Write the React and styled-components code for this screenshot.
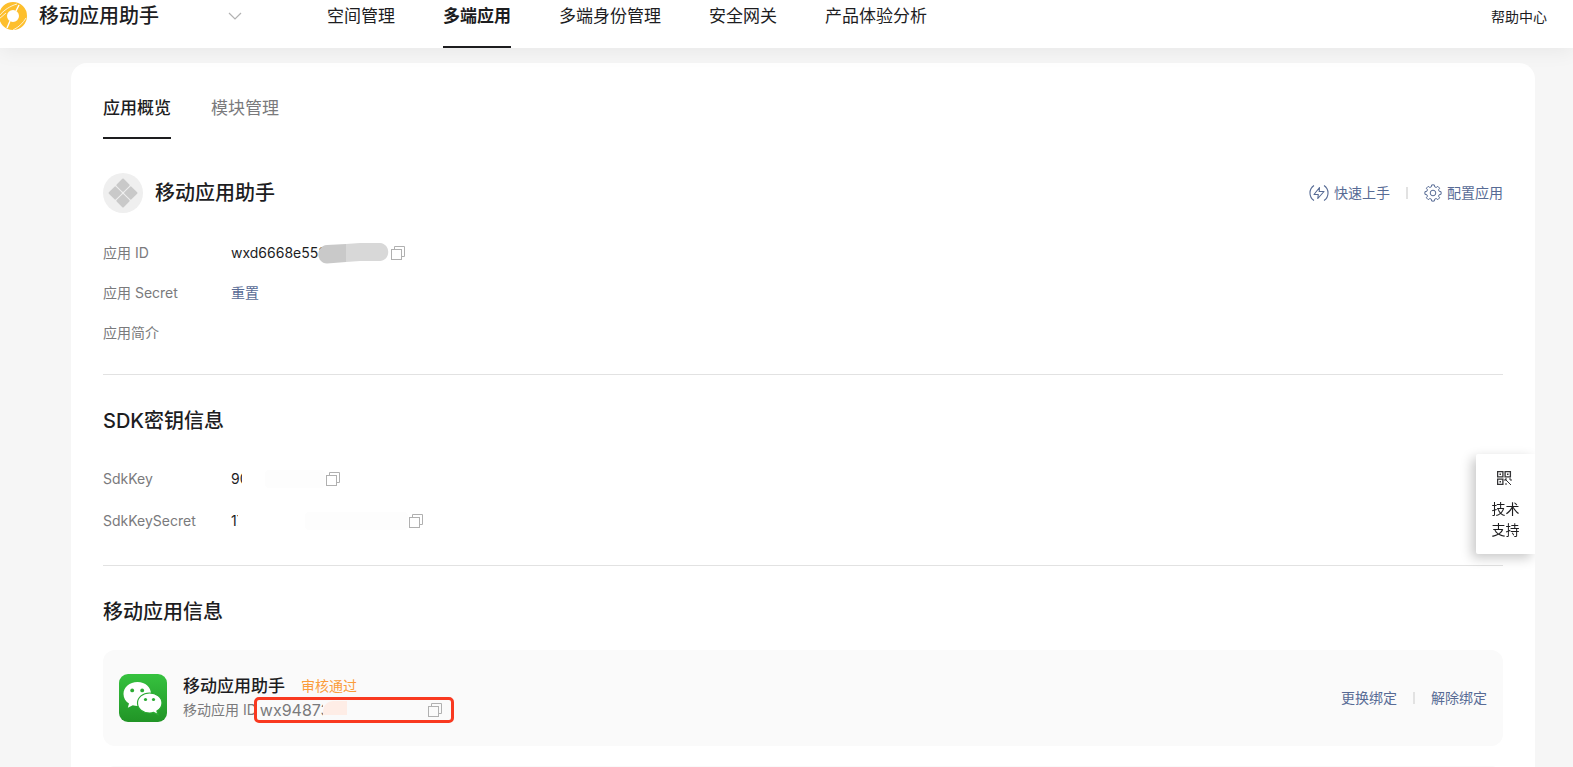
import React from 'react'
import styled, { createGlobalStyle, css } from 'styled-components'

const GlobalStyle = createGlobalStyle`
  * { box-sizing: border-box; }
  body {
    margin: 0;
    background: #f6f6f6;
    color: #1d1d1f;
    font-family: Inter, "Noto Sans CJK SC", sans-serif;
    font-size: 14px;
    line-height: 20px;
  }
  h1, h2, h3, dl, dd, dt { margin: 0; font: inherit; }
  button { padding: 0; border: 0; background: none; font: inherit; color: inherit; cursor: pointer; }
  a { color: inherit; text-decoration: none; }
  svg { display: block; flex: none; }
`

const Header = styled.header`
  position: relative;
  display: flex;
  align-items: stretch;
  height: 48px;
  padding-right: 26px;
  background: #fff;
  box-shadow: 0 4px 20px rgba(0, 0, 0, 0.06);
`

const Brand = styled.button`
  display: flex;
  align-items: center;
  width: 243px;
  height: 32px;
  font-size: 20px;
  line-height: 28px;
  font-weight: 500;

  span { flex: 1; padding-left: 12px; text-align: left; }
`

const Nav = styled.nav`
  display: flex;
  flex: 1;
  gap: 48px;
  padding-left: 84px;
`

const NavLink = styled.a`
  padding-top: 4px;
  font-size: 17px;
  line-height: 24px;
  ${p => p.$active && css`
    font-weight: 700;
    border-bottom: 2px solid #1d1d1f;
  `}
`

const HelpLink = styled.a`
  padding-top: 7px;
`

const Panel = styled.main`
  margin: 15px 38px 0 71px;
  padding: 33px 32px 0;
  min-height: calc(100vh - 63px);
  border-radius: 16px 16px 0 0;
  background: #fff;
`

const Tabs = styled.nav`
  display: flex;
  gap: 40px;
`

const Tab = styled.a`
  height: 43px;
  font-size: 17px;
  line-height: 24px;
  color: ${p => (p.$active ? '#1d1d1f' : '#7a7a7c')};
  font-weight: ${p => (p.$active ? 500 : 400)};
  border-bottom: 2px solid ${p => (p.$active ? '#1d1d1f' : 'transparent')};
`

const TitleRow = styled.div`
  display: flex;
  align-items: center;
  gap: 12px;
  margin-top: 34px;
`

const Title = styled.h1`
  flex: 1;
  font-size: 20px;
  line-height: 28px;
  font-weight: 500;
`

const Section = styled.section`
  margin-top: ${p => (p.$first ? 30 : 32)}px;
  padding-bottom: ${p => (p.$first ? 31 : 34)}px;
  border-bottom: 1px solid #e2e2e2;
`

const SectionTitle = styled.h2`
  font-size: 20px;
  line-height: 28px;
  font-weight: 500;
`

const Fields = styled.dl`
  display: flex;
  flex-direction: column;
  gap: ${p => p.$gap}px;
  margin-top: ${p => p.$top || 0}px;
`

const Field = styled.div`
  display: flex;
  align-items: center;
  height: 20px;

  dt { width: 128px; color: #7a7a7c; }
  dd { display: flex; align-items: center; }
`

// the masks lie over the end of the value before them
const Brush = styled.svg`
  position: relative;
  margin-left: -9px;
`

const Mask = styled.span`
  position: relative;
  display: flex;
  justify-content: flex-end;
  width: ${p => p.$width}px;
  height: 18px;
  margin-left: -7px;
  background: ${p => p.$color || '#fff'};
`

const Haze = styled.span`
  width: ${p => p.$width}px;
  border-radius: 4px;
  background: #fdfdfd;
`

const Actions = styled.div`
  display: flex;
  align-items: center;
  color: #576b95;
`

const Action = styled.button`
  display: flex;
  align-items: center;
  gap: 5px;
`

const Divider = styled.span`
  width: 2px;
  height: 12px;
  margin: 0 16px;
  background: #e2e2e2;
`

const AppSection = styled.section`
  margin-top: 32px;
`

const AppCard = styled.article`
  display: flex;
  align-items: center;
  height: 96px;
  margin-top: ${p => p.$top}px;
  padding: 0 16px;
  border-radius: 12px;
  background: #fafafa;
`

const AppText = styled.div`
  flex: 1;
  padding-left: 16px;
`

const AppName = styled.h3`
  display: flex;
  align-items: center;
  gap: 16px;
  font-size: 17px;
  line-height: 24px;
  font-weight: 500;
`

const Status = styled.span`
  font-size: 14px;
  font-weight: 400;
  color: #fa9d3b;
`

const AppId = styled.div`
  display: flex;
  align-items: center;
  height: 24px;
  color: #7a7a7c;
`

const IdLabel = styled.span`
  white-space: nowrap;
`

const Marked = styled.span`
  position: relative;
  display: flex;
  align-items: center;
  width: 200px;
  height: 26px;
  margin-left: -3px;
  padding: 0 8px 0 3px;
  border: 3px solid #f93920;
  border-radius: 5px;
  background: #fafafa;
  font-size: 16px;

  button { margin-left: auto; }
`

const Smudge = styled.span`
  width: 24px;
  height: 14px;
  border-radius: 10px 0 0 0;
  background: #feede6;
`

const Support = styled.button`
  position: fixed;
  right: 38px;
  top: 454px;
  display: flex;
  flex-direction: column;
  align-items: center;
  width: 59px;
  height: 100px;
  padding: 17px 14px 0;
  border-radius: 2px 0 0 2px;
  background: #fff;
  box-shadow: -4px 4px 12px rgba(0, 0, 0, 0.22);
  clip-path: inset(-20px 0 -20px -20px);
  line-height: 21px;

  span { margin-top: 13px; }
`

function Logo() {
  return (
    <svg width="27" height="30" viewBox="0 0 27 30" fill="none">
      <circle cx="13" cy="15" r="10" stroke="#fdbf2d" strokeWidth="8" />
      <path d="M-1 15C4 9 10 5 17 3M-1 18L6 12M13 29C19 26 23 22 26 17" stroke="#fff" strokeWidth="0.8" />
      <path d="M19 4L16 10M10 20L7 27" stroke="#fff" strokeWidth="1.4" />
    </svg>
  )
}

function AppBadge() {
  return (
    <svg width="40" height="40" viewBox="0 0 40 40">
      <circle cx="20" cy="20" r="20" fill="#efefef" />
      <g transform="rotate(45 20 20)" fill="#c9c9c9">
        <rect x="9.5" y="9.5" width="10" height="10" rx="1" />
        <rect x="20.5" y="9.5" width="10" height="10" rx="1" />
        <rect x="9.5" y="20.5" width="10" height="10" rx="1" />
        <rect x="20.5" y="20.5" width="10" height="10" rx="1" />
      </g>
    </svg>
  )
}

function BoltIcon() {
  return (
    <svg width="20" height="18" viewBox="0 0 20 18" fill="none" stroke="#576b95" strokeWidth="1.1">
      <path d="M5 1.5A9 9 0 0 0 5 16.5M15 1.5A9 9 0 0 1 15 16.5" />
      <path d="M10.5 3.500L5 10.500H9.300L8.800 14.500L15 7.500H10.200Z" strokeLinejoin="round" />
    </svg>
  )
}

// eight teeth, four corners each: [degrees from the middle of the tooth, radius]
const tooth = [[-15, 6.4], [-9, 8.2], [9, 8.2], [15, 6.4]]

const gearPoints = [0, 45, 90, 135, 180, 225, 270, 315].flatMap(turn =>
  tooth.map(([angle, r]) => {
    const a = ((turn + angle) * Math.PI) / 180
    return `${9 + r * Math.sin(a)},${9 - r * Math.cos(a)}`
  })
).join(' ')

function GearIcon() {
  return (
    <svg width="18" height="18" viewBox="0 0 18 18" fill="none" stroke="#576b95" strokeLinejoin="round">
      <polygon points={gearPoints} />
      <circle cx="9" cy="9" r="2.800" />
    </svg>
  )
}

function CopyButton({ label }) {
  return (
    <button aria-label={label}>
      <svg width="16" height="16" viewBox="0 0 16 16" fill="none" stroke="#b0b0b0">
        <path d="M4.500 4V1.500H14.500V11.500H12" />
        <rect x="1.500" y="4.500" width="10" height="10" />
      </svg>
    </button>
  )
}

// grey brush stroke that hides the tail of the id
function BrushMask() {
  return (
    <Brush width="72" height="22" viewBox="0 0 72 22">
      <path d="M9 3L28 2V20L9 21.500C-2 21 -3 4 9 3Z" fill="#c9c9c9" />
      <path d="M28 2L42 1H62C73 2 73 18 62 19H42L28 20Z" fill="#d8d8d8" />
    </Brush>
  )
}

function WechatIcon() {
  return (
    <svg width="48" height="48" viewBox="0 0 48 48">
      <defs>
        <linearGradient id="wx" x1="0" y1="0" x2="0" y2="1">
          <stop offset="0" stopColor="#36c23f" />
          <stop offset="1" stopColor="#219426" />
        </linearGradient>
      </defs>
      <rect width="48" height="48" rx="9" fill="url(#wx)" />
      <path d="M18.500 8C10.500 8 4.500 13.200 4.500 20C4.500 24 6.500 27.300 10 29.500L8.800 33.700L13.800 31.200C15.300 31.700 17 32 18.500 32C26.500 32 32 26.600 32 20C32 13.200 26.500 8 18.500 8Z" fill="#fff" />
      <path d="M30.500 19C23.800 19 18.500 23.400 18.500 29C18.500 34.700 23.800 39 30.500 39C32 39 33.300 38.800 34.600 38.400L39 40.500L37.900 37C41 35.200 43 32.300 43 29C43 23.400 37.300 19 30.500 19Z" fill="#fff" stroke="#2bab32" strokeWidth="1.200" />
      <g fill="#2bab32">
        <circle cx="13.200" cy="16.400" r="1.900" />
        <circle cx="23.200" cy="16.400" r="1.900" />
        <circle cx="26.500" cy="25.500" r="1.600" />
        <circle cx="34.500" cy="25.500" r="1.600" />
      </g>
    </svg>
  )
}

function QrIcon() {
  return (
    <svg width="17" height="14" viewBox="0 0 17 14" fill="none" stroke="#333335">
      <path d="M0.600 0.600H5.900V5.900H0.600ZM8.100 0.600H13.400V5.900H8.100ZM0.600 8.100H5.900V13.400H0.600Z" strokeWidth="1.300" />
      <path d="M2.500 3.250H4M10 3.250H11.500M2.500 10.750H4" strokeWidth="1.500" />
      <path d="M8 8L14 14M12 8H14V10M8 10V8H10M8 13H10" />
    </svg>
  )
}

const navItems = ['空间管理', '多端应用', '多端身份管理', '安全网关', '产品体验分析']

function App() {
  return (
    <React.Fragment>
      <GlobalStyle />
      <Header>
        <Brand>
          <Logo />
          <span>移动应用助手</span>
          <svg width="16" height="10" viewBox="0 0 16 10" fill="none" stroke="#b2b2b2" strokeWidth="1.200">
            <path d="M2 2L8 8L14 2" />
          </svg>
        </Brand>
        <Nav>
          {navItems.map(item => (
            <NavLink key={item} href="#" $active={item === '多端应用'}>{item}</NavLink>
          ))}
        </Nav>
        <HelpLink href="#">帮助中心</HelpLink>
      </Header>

      <Panel>
        <Tabs>
          <Tab href="#" $active>应用概览</Tab>
          <Tab href="#">模块管理</Tab>
        </Tabs>

        <TitleRow>
          <AppBadge />
          <Title>移动应用助手</Title>
          <Actions>
            <Action><BoltIcon />快速上手</Action>
            <Divider />
            <Action><GearIcon />配置应用</Action>
          </Actions>
        </TitleRow>

        <Section $first>
          <Fields $gap={20}>
            <Field>
              <dt>应用 ID</dt>
              <dd>
                <span>wxd6668e553</span>
                <BrushMask />
                <CopyButton label="复制应用 ID" />
              </dd>
            </Field>
            <Field>
              <dt>应用 Secret</dt>
              <dd><Actions><Action>重置</Action></Actions></dd>
            </Field>
            <Field>
              <dt>应用简介</dt>
              <dd />
            </Field>
          </Fields>
        </Section>

        <Section>
          <SectionTitle>SDK密钥信息</SectionTitle>
          <Fields $gap={22} $top={34}>
            <Field>
              <dt>SdkKey</dt>
              <dd>
                <span>90</span>
                <Mask $width={83}><Haze $width={60} /></Mask>
                <CopyButton label="复制 SdkKey" />
              </dd>
            </Field>
            <Field>
              <dt>SdkKeySecret</dt>
              <dd>
                <span>17</span>
                <Mask $width={170}><Haze $width={103} /></Mask>
                <CopyButton label="复制 SdkKeySecret" />
              </dd>
            </Field>
          </Fields>
        </Section>

        <AppSection>
          <SectionTitle>移动应用信息</SectionTitle>
          <AppCard $top={24}>
            <WechatIcon />
            <AppText>
              <AppName>移动应用助手 <Status>审核通过</Status></AppName>
              <AppId>
                <IdLabel>移动应用 ID</IdLabel>
                <Marked>
                  <span>wx94873</span>
                  <Mask $width={24} $color="#fafafa"><Smudge /></Mask>
                  <CopyButton label="复制移动应用 ID" />
                </Marked>
              </AppId>
            </AppText>
            <Actions>
              <Action>更换绑定</Action>
              <Divider />
              <Action>解除绑定</Action>
            </Actions>
          </AppCard>
          <AppCard $top={20} />
        </AppSection>
      </Panel>

      <Support>
        <QrIcon />
        <span>技术支持</span>
      </Support>
    </React.Fragment>
  )
}

export default App
